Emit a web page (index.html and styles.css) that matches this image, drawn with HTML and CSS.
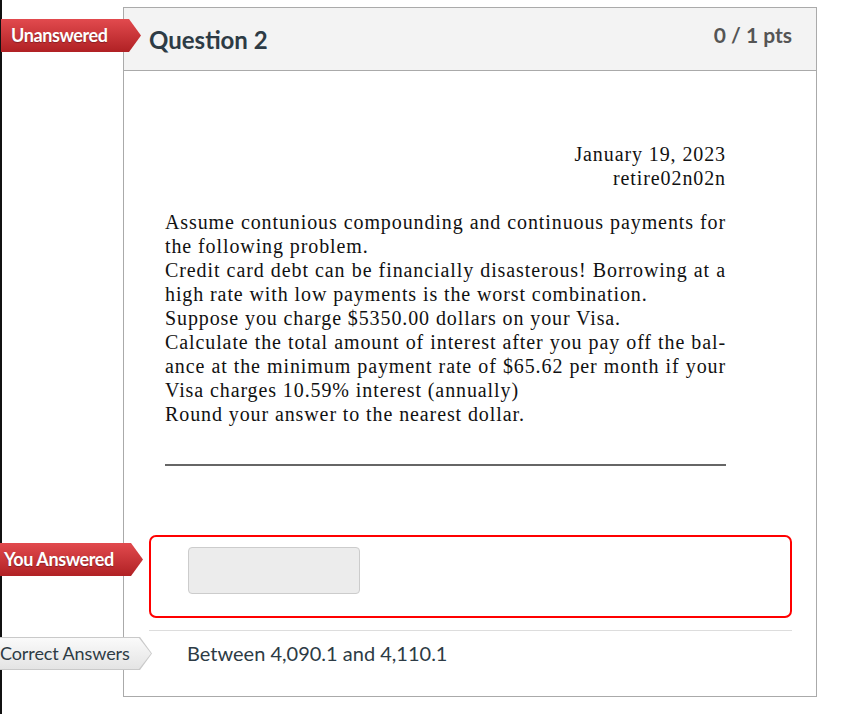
FILE: index.html
```html
<!DOCTYPE html>
<html lang="en">
<head>
  <meta charset="UTF-8">
  <title>Question 2</title>
  <link rel="stylesheet" href="styles.css">
</head>
<body>
  <div class="page">
    <div class="question">
      <div class="flag flag-red flag-top">Unanswered</div>
      <div class="question-header">
        <h2>Question 2</h2>
        <span class="pts">0 / 1 pts</span>
      </div>

      <div class="question-body">
        <div class="tex">
          <div class="tex-head">
            <div>January 19, 2023</div>
            <div>retire02n02n</div>
          </div>
          <div class="tex-text">
            <div class="jl">Assume contunious compounding and continuous payments for</div>
            <div>the following problem.</div>
            <div class="jl">Credit card debt can be financially disasterous! Borrowing at a</div>
            <div>high rate with low payments is the worst combination.</div>
            <div>Suppose you charge $5350.00 dollars on your Visa.</div>
            <div class="jl">Calculate the total amount of interest after you pay off the bal-</div>
            <div class="jl">ance at the minimum payment rate of $65.62 per month if your</div>
            <div>Visa charges 10.59% interest (annually)</div>
            <div>Round your answer to the nearest dollar.</div>
          </div>
          <div class="tex-rule"></div>
        </div>

        <div class="answer-row">
          <div class="flag flag-red flag-you">You Answered</div>
          <div class="answer-box">
            <div class="answer-input"></div>
          </div>
        </div>

        <div class="correct-row">
          <div class="flag flag-grey">Correct Answers</div>
          <span class="correct-text">Between 4,090.1 and 4,110.1</span>
        </div>
      </div>
    </div>
  </div>
</body>
</html>
```

FILE: styles.css
```css
body {
  margin: 0;
  background: #fff;
  font-family: Lato, "Liberation Sans", sans-serif;
  color: #2d3b45;
}

.page {
  border-left: 2px solid #111;
  min-height: 714px;
  box-sizing: border-box;
  padding-top: 7px;
}

.question {
  position: relative;
  margin-left: 121px;
  width: 692px;
  border: 1px solid #aaa;
}

.question-header {
  display: flex;
  justify-content: space-between;
  align-items: flex-start;
  height: 62px;
  background: #f3f3f3;
  border-bottom: 1px solid #aaa;
  padding: 0 24px 0 25px;
}

.question-header h2 {
  margin: 18px 0 0;
  font-size: 24px;
  font-weight: 700;
  line-height: 28px;
  color: #2d3b45;
}

.pts {
  margin-top: 14px;
  font-size: 21px;
  font-weight: 700;
  line-height: 26px;
  color: #555;
}

/* labels on the left edge */
.flag {
  position: absolute;
  left: -123px;
  height: 33px;
  line-height: 33px;
  font-size: 18px;
  font-weight: 700;
  color: #fff;
  box-sizing: border-box;
  clip-path: polygon(0 0, calc(100% - 12px) 0, 100% 50%, calc(100% - 12px) 100%, 0 100%);
  text-shadow: 0 1px 1px rgba(0, 0, 0, 0.3);
}

.flag-red {
  background: linear-gradient(#e24a4e, #b02124);
}

.flag-top {
  top: 11px;
  width: 140px;
  padding-left: 10px;
  letter-spacing: -0.4px;
}

.answer-row .flag,
.correct-row .flag {
  left: -149px;
}

.flag-you {
  top: 8px;
  width: 143px;
  padding-left: 4px;
  letter-spacing: -0.4px;
}

.flag-grey {
  top: 6px;
  width: 152px;
  padding-left: 0;
  color: #2d3b45;
  font-weight: 400;
  text-shadow: none;
  background: #c9c9c9;
  isolation: isolate;
  letter-spacing: -0.1px;
}

.flag-grey::before {
  content: "";
  position: absolute;
  top: 1px;
  left: 0;
  right: 1px;
  bottom: 1px;
  background: linear-gradient(#fafafa, #e4e4e4);
  clip-path: polygon(0 0, calc(100% - 12px) 0, 100% 50%, calc(100% - 12px) 100%, 0 100%);
  z-index: -1;
}

.question-body {
  padding: 0 24px 12px 25px;
}

.tex {
  margin-left: 16px;
  width: 561px;
  font-family: "Liberation Serif", serif;
  font-size: 20px;
  letter-spacing: 0.9px;
  line-height: 24px;
  color: #111;
}

.tex-head {
  padding-top: 71px;
  text-align: right;
}

.tex-text {
  margin-top: 20px;
}

.tex-text div {
  white-space: nowrap;
}

.tex-text .jl {
  text-align: justify;
  text-align-last: justify;
  white-space: normal;
}

.tex-rule {
  margin-top: 38px;
  height: 2px;
  background: #666;
}

.answer-row {
  position: relative;
  margin-top: 69px;
}

.answer-box {
  border: 2px solid #f00;
  border-radius: 7px;
  padding: 10px 0 0 37px;
  height: 69px;
}

.answer-input {
  width: 170px;
  height: 45px;
  background: #ececec;
  border: 1px solid #ccc;
  border-radius: 4px;
}

.correct-row {
  position: relative;
  margin-top: 12px;
  border-top: 1px solid #ddd;
  padding: 10px 0 0 38px;
  height: 43px;
}

.correct-text {
  font-size: 20px;
  line-height: 24px;
  color: #2d3b45;
}
```
